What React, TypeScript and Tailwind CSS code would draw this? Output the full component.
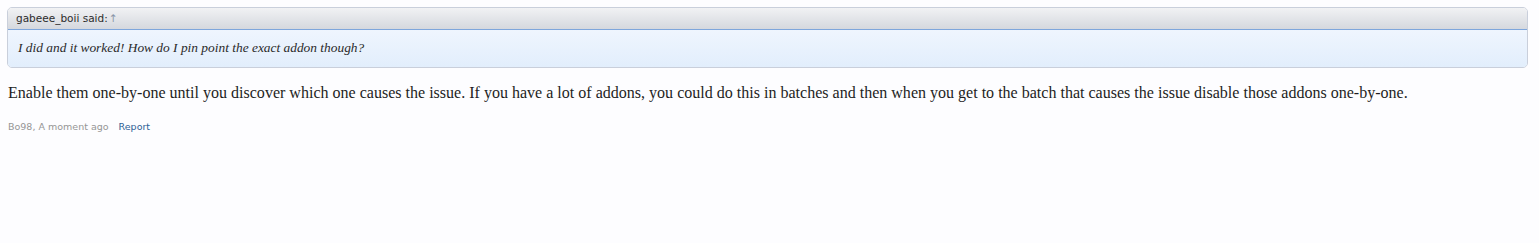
export default function App() {
  return (
    <div className="min-h-[243px] bg-[#fdfdff] pt-[7px] pl-[7px] pr-[11px]">
      <div className="rounded-[5px] border border-[#c9cfdb] overflow-hidden">
        <div className="h-[22px] bg-gradient-to-b from-[#f1f2f4] to-[#d5d8de] border-b border-[#7ea6dc] pl-[8px] flex items-center text-[10.5px] text-[#2c2c2c]" style={{ fontFamily: '"DejaVu Sans", Tahoma, sans-serif' }}>
          <span>gabeee_boii said:</span>
          <span className="ml-[1px] text-[#8a96a8]">↑</span>
        </div>
        <div className="h-[37px] bg-gradient-to-b from-[#eff5fe] to-[#e2eefc] pl-[10px] flex items-center italic text-[13.4px] text-[#2a2a2a]" style={{ fontFamily: '"Liberation Serif", Georgia, serif' }}>
          I did and it worked! How do I pin point the exact addon though?
        </div>
      </div>
      <div className="mt-[14px] pl-[1px] text-[16.05px] leading-[22px] text-[#1d1d1d]" style={{ fontFamily: '"Liberation Serif", Georgia, serif' }}>
        Enable them one-by-one until you discover which one causes the issue. If you have a lot of addons, you could do this in batches and then when you get to the batch that causes the issue disable those addons one-by-one.
      </div>
      <div className="mt-[16px] pl-[1px] text-[9.5px] flex gap-[10px]" style={{ fontFamily: '"DejaVu Sans", Tahoma, sans-serif' }}>
        <span className="text-[#969696]">Bo98, A moment ago</span>
        <span className="text-[#2f5f96]">Report</span>
      </div>
    </div>
  );
}
